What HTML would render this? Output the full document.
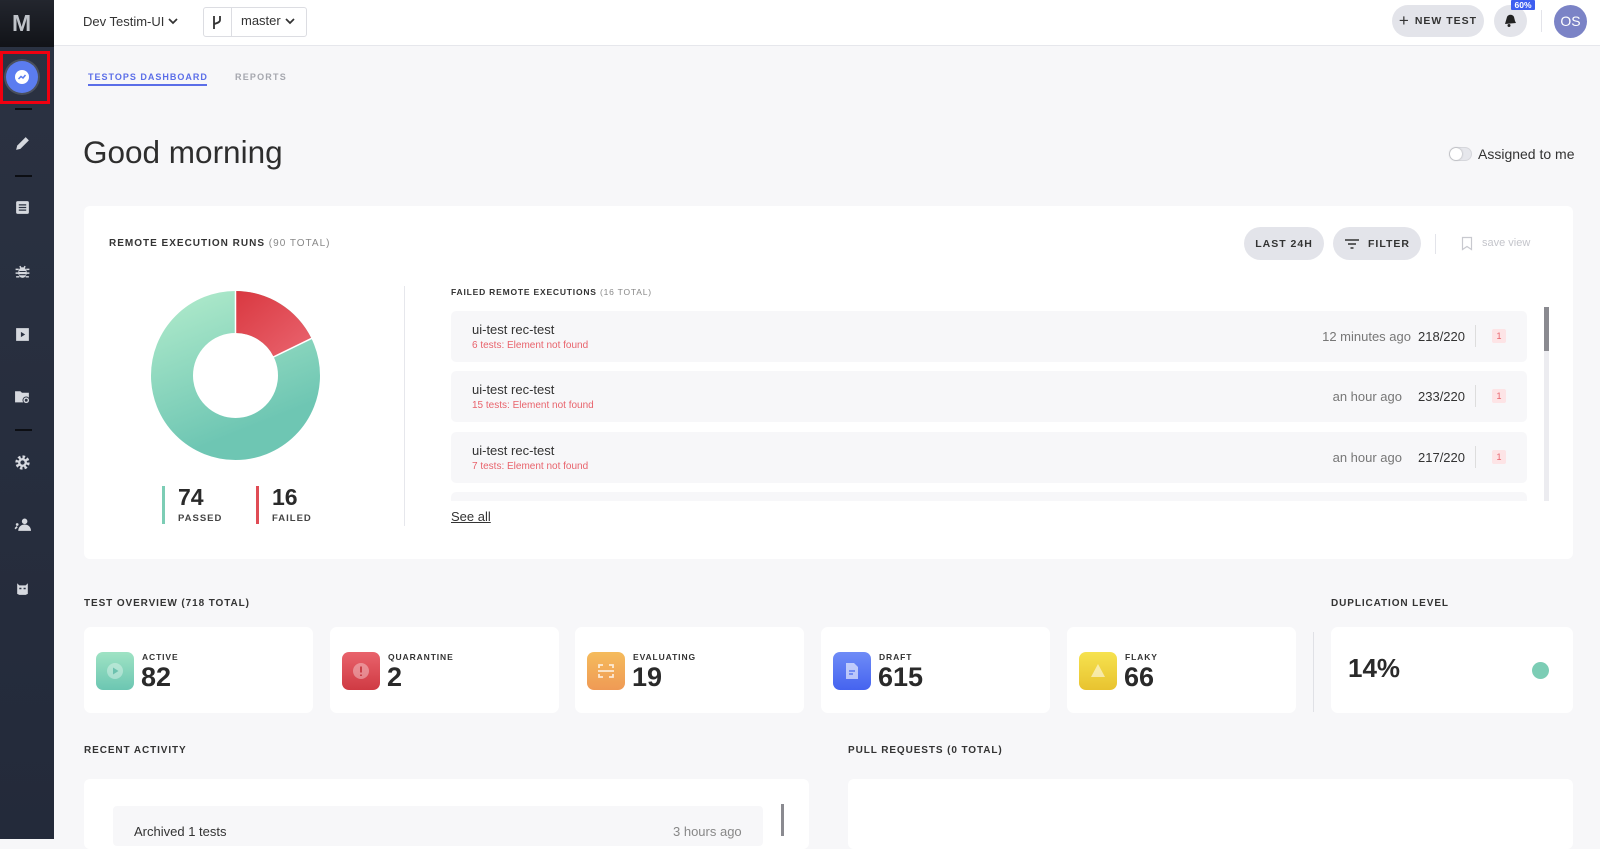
<!DOCTYPE html>
<html><head><meta charset="utf-8"><style>
*{box-sizing:border-box;margin:0;padding:0}
body{width:1600px;height:839px;overflow:hidden;background:#f7f7f9;font-family:"Liberation Sans",sans-serif;color:#333;position:relative}
.abs{position:absolute}
.side{left:0;top:0;width:54px;height:839px;background:linear-gradient(#2b3242,#232a3a)}
.logo{left:0;top:0;width:54px;height:47px;background:linear-gradient(#23262e,#111318)}
.sep{left:15px;width:17px;height:2px;background:#0c0e13}
.ic{left:14px;width:17px;height:17px}
.top{left:54px;top:0;width:1546px;height:46px;background:#fff;border-bottom:1px solid #e6e7ec}
.cap{font-size:10px;font-weight:bold;letter-spacing:1.1px;color:#333}
.cap span{color:#888;font-weight:normal}
.btn{background:#e3e4ea;border-radius:17px;font-size:10.5px;font-weight:bold;letter-spacing:1px;color:#333;display:flex;align-items:center;justify-content:center}
.card{background:#fff;border-radius:7px;top:627px;height:86px;width:229px}
.card .i{position:absolute;left:12px;top:25px;width:38px;height:38px;border-radius:7px}
.card .i svg{position:absolute;left:9px;top:9px}
.card .l{position:absolute;left:58px;top:25px;font-size:8.5px;font-weight:bold;letter-spacing:0.9px;color:#333}
.card .n{position:absolute;left:57px;top:35px;font-size:27px;font-weight:bold;color:#2a2a2a}
.row{left:451px;width:1076px;height:51px;background:#f7f7f9;border-radius:5px}
.row .t{position:absolute;left:21px;top:11px;font-size:13px;color:#333}
.row .s{position:absolute;left:21px;top:29px;font-size:10px;color:#e8636c}
.row .tm{position:absolute;right:112px;top:18px;font-size:13px;color:#777}
.row .v{position:absolute;right:62px;top:18px;font-size:13px;color:#333}
.row .d{position:absolute;left:1024px;top:14px;width:1px;height:22px;background:#ddd}
.row .b{position:absolute;left:1041px;top:18px;width:14px;height:14px;background:#fde4e6;color:#e8636c;font-size:9px;text-align:center;line-height:14px;border-radius:2px}
</style></head><body>
<div class="abs side"></div>
<div class="abs logo"></div>
<div class="abs" style="left:12px;top:10px;font-size:23px;font-weight:bold;color:#bfc3c9">M</div>
<div class="abs" style="left:0;top:51px;width:50px;height:53px;border:3px solid #f00010"></div>
<div class="abs" style="left:6px;top:61px;width:32px;height:32px;border-radius:50%;background:#5b7cf0;box-shadow:0 0 0 2px rgba(255,255,255,.15)"></div>
<div class="abs" style="left:15px;top:70px;width:14px;height:14px;border-radius:50%;background:#fff"></div>
<svg class="abs" style="left:15px;top:70px" width="14" height="14"><path d="M3.5 9 L6 6.5 L8 8 L10.5 5" stroke="#5b7cf0" stroke-width="1.5" fill="none"/></svg>
<div class="abs sep" style="top:108px"></div>
<div class="abs sep" style="top:175px"></div>
<div class="abs sep" style="top:429px"></div>
<svg class="abs ic" style="top:135px" viewBox="0 0 16 16"><path d="M2 14 L3 10 L11 2 L14 5 L6 13 Z" fill="#d6d9df"/></svg>
<svg class="abs ic" style="top:199px" viewBox="0 0 16 16"><rect x="2" y="2" width="12" height="12" rx="1.5" fill="#d6d9df"/><path d="M4.5 5.5h7M4.5 8h7M4.5 10.5h7" stroke="#2b3242" stroke-width="1.2"/></svg>
<svg class="abs ic" style="top:263px" viewBox="0 0 16 16"><ellipse cx="8" cy="9" rx="4" ry="5" fill="#d6d9df"/><path d="M1.5 6h3M11.5 6h3M1.5 9.5h3M11.5 9.5h3M2 13h3M11 13h3M5.5 3l1 1.5M10.5 3l-1 1.5" stroke="#d6d9df" stroke-width="1.4"/><path d="M5 8h6M5 11h6" stroke="#2b3242" stroke-width="1"/></svg>
<svg class="abs ic" style="top:326px" viewBox="0 0 16 16"><rect x="2" y="2" width="12" height="12" fill="#d6d9df"/><path d="M6.5 5.5v5l4-2.5z" fill="#2b3242"/></svg>
<svg class="abs ic" style="top:388px" viewBox="0 0 16 16"><path d="M1 3h5l1.5 1.5H14v9H1z" fill="#d6d9df"/><circle cx="11.5" cy="11.5" r="3.5" fill="#2b3242"/><circle cx="11.5" cy="11.5" r="2" fill="none" stroke="#d6d9df" stroke-width="1.3"/></svg>
<svg class="abs ic" style="top:454px" viewBox="0 0 16 16"><circle cx="8" cy="8" r="5" fill="none" stroke="#d6d9df" stroke-width="3.5" stroke-dasharray="2.2 1.7"/><circle cx="8" cy="8" r="4.2" fill="#d6d9df"/><circle cx="8" cy="8" r="2" fill="#2b3242"/></svg>
<svg class="abs ic" style="top:516px" viewBox="0 0 16 16"><circle cx="10" cy="5" r="2.6" fill="#d6d9df"/><path d="M4 14c0-4 3-6 6-6s6 2 6 6z" fill="#d6d9df"/><circle cx="3" cy="8" r="1.3" fill="#d6d9df"/><path d="M1 12l2-2" stroke="#d6d9df" stroke-width="1.5"/></svg>
<svg class="abs ic" style="top:580px" viewBox="0 0 16 16"><path d="M3 3l2 2h6l2-2v10l-2 1H5l-2-1z" fill="#d6d9df"/><path d="M5 8h2M9 8h2" stroke="#2b3242" stroke-width="1.4"/></svg>

<div class="abs top"></div>
<div class="abs" style="left:83px;top:14px;font-size:13px;color:#333">Dev Testim-UI</div>
<svg class="abs" style="left:167px;top:16px" width="12" height="10"><path d="M2 3l4 4 4-4" stroke="#333" stroke-width="1.7" fill="none"/></svg>
<div class="abs" style="left:203px;top:7px;width:104px;height:30px;border:1px solid #dcdde2;border-radius:3px;background:#fff"></div>
<div class="abs" style="left:231px;top:8px;width:1px;height:28px;background:#dcdde2"></div>
<svg class="abs" style="left:210px;top:14px" width="14" height="16"><path d="M4 2v13M10 2v4c0 2-2 3-6 4" stroke="#333" stroke-width="1.8" fill="none"/></svg>
<div class="abs" style="left:241px;top:13px;font-size:13px;color:#333">master</div>
<svg class="abs" style="left:284px;top:16px" width="12" height="10"><path d="M2 3l4 4 4-4" stroke="#333" stroke-width="1.7" fill="none"/></svg>
<div class="abs btn" style="left:1392px;top:5px;width:92px;height:32px;font-size:10.5px"><span style="font-size:17px;font-weight:normal;margin-right:5px">+</span>NEW TEST</div>
<div class="abs btn" style="left:1494px;top:5px;width:33px;height:32px"></div>
<svg class="abs" style="left:1502px;top:12px" width="16" height="16" viewBox="0 0 16 16"><path d="M3 12l2-7c1-3 6-3 7 0l1 4 1 2z" fill="#222"/><circle cx="7" cy="13.5" r="1.5" fill="#222"/></svg>
<div class="abs" style="left:1511px;top:0;width:24px;height:10px;background:#3d5ef0;color:#fff;font-size:8.5px;font-weight:bold;text-align:center;line-height:10px;border-radius:1px">60%</div>
<div class="abs" style="left:1541px;top:10px;width:1px;height:22px;background:#e3e4ea"></div>
<div class="abs" style="left:1554px;top:5px;width:33px;height:33px;border-radius:50%;background:#7b83c6;color:#fff;font-size:14px;text-align:center;line-height:33px">OS</div>

<div class="abs" style="left:88px;top:72px;font-size:9px;font-weight:bold;letter-spacing:1px;color:#5b6ee8">TESTOPS DASHBOARD</div>
<div class="abs" style="left:88px;top:84px;width:119px;height:2px;background:#5b6ee8"></div>
<div class="abs" style="left:235px;top:72px;font-size:9px;font-weight:bold;letter-spacing:1.2px;color:#a5a7ae">REPORTS</div>

<div class="abs" style="left:83px;top:134px;font-size:31.5px;color:#2e2e2e">Good morning</div>
<div class="abs" style="left:1449px;top:147px;width:23px;height:14px;border-radius:7px;background:#e6e7ec;border:1px solid #d6d7dc"></div>
<div class="abs" style="left:1450px;top:148px;width:12px;height:12px;border-radius:50%;background:#fff;box-shadow:0 0 2px rgba(0,0,0,.3)"></div>
<div class="abs" style="left:1478px;top:146px;font-size:14px;color:#333">Assigned to me</div>

<div class="abs" style="left:84px;top:206px;width:1489px;height:353px;background:#fff;border-radius:6px"></div>
<div class="abs cap" style="left:109px;top:238px;letter-spacing:1px">REMOTE EXECUTION RUNS <span>(90 TOTAL)</span></div>
<div class="abs btn" style="left:1244px;top:227px;width:80px;height:33px">LAST 24H</div>
<div class="abs btn" style="left:1333px;top:227px;width:88px;height:33px"><svg width="16" height="12" style="margin-right:8px"><path d="M1 2h14M4 6h8M6.5 10h3" stroke="#333" stroke-width="1.6"/></svg>FILTER</div>
<div class="abs" style="left:1435px;top:234px;width:1px;height:20px;background:#e3e4ea"></div>
<svg class="abs" style="left:1461px;top:236px" width="12" height="15"><path d="M1.5 1.5h9v12l-4.5-3-4.5 3z" fill="none" stroke="#c8c9cf" stroke-width="1.2"/></svg>
<div class="abs" style="left:1482px;top:237px;font-size:11px;color:#c4c5cb">save view</div>

<svg class="abs" style="left:150px;top:290px" width="171" height="171" viewBox="-85.5 -85.5 171 171">
<defs><linearGradient id="gg" x1="0" y1="0" x2="0.4" y2="1"><stop offset="0" stop-color="#a8e6c8"/><stop offset="1" stop-color="#6ec6b3"/></linearGradient>
<linearGradient id="rg" x1="0" y1="0" x2="1" y2="1"><stop offset="0" stop-color="#d93840"/><stop offset="1" stop-color="#ea6570"/></linearGradient></defs>
<circle r="63.5" fill="none" stroke="url(#gg)" stroke-width="42"/>
<path d="M0 -84.5 A84.5 84.5 0 0 1 75.95 -37.04 L38.2 -18.63 A42.5 42.5 0 0 0 0 -42.5Z" fill="url(#rg)"/>
<path d="M0 -85V-42M76.5 -37.3L37.8 -18.4" stroke="#fff" stroke-width="1.5"/>
</svg>
<div class="abs" style="left:162px;top:486px;width:3px;height:38px;background:#7ccdb5"></div>
<div class="abs" style="left:178px;top:484px;font-size:23px;font-weight:bold;color:#2a2a2a">74</div>
<div class="abs" style="left:178px;top:513px;font-size:9.5px;font-weight:bold;letter-spacing:1px;color:#444">PASSED</div>
<div class="abs" style="left:256px;top:486px;width:3px;height:38px;background:#e04c55"></div>
<div class="abs" style="left:272px;top:484px;font-size:23px;font-weight:bold;color:#2a2a2a">16</div>
<div class="abs" style="left:272px;top:513px;font-size:9.5px;font-weight:bold;letter-spacing:1px;color:#444">FAILED</div>
<div class="abs" style="left:404px;top:286px;width:1px;height:240px;background:#e6e7ec"></div>

<div class="abs cap" style="left:451px;top:287px;font-size:8.5px;letter-spacing:0.8px">FAILED REMOTE EXECUTIONS <span>(16 TOTAL)</span></div>
<div class="abs row" style="top:311px"><div class="t">ui-test rec-test</div><div class="s">6 tests: Element not found</div><div class="tm" style="right:116px">12 minutes ago</div><div class="v">218/220</div><div class="d"></div><div class="b">1</div></div>
<div class="abs row" style="top:371px"><div class="t">ui-test rec-test</div><div class="s">15 tests: Element not found</div><div class="tm" style="right:125px">an hour ago</div><div class="v">233/220</div><div class="d"></div><div class="b">1</div></div>
<div class="abs row" style="top:432px"><div class="t">ui-test rec-test</div><div class="s">7 tests: Element not found</div><div class="tm" style="right:125px">an hour ago</div><div class="v">217/220</div><div class="d"></div><div class="b">1</div></div>
<div class="abs" style="left:451px;top:492px;width:1076px;height:9px;background:#f7f7f9;border-radius:5px 5px 0 0"></div>
<div class="abs" style="left:1544px;top:307px;width:5px;height:194px;background:#ececf0"></div>
<div class="abs" style="left:1544px;top:307px;width:5px;height:44px;background:#8a8a90"></div>
<div class="abs" style="left:451px;top:509px;font-size:13px;color:#333;text-decoration:underline">See all</div>

<div class="abs cap" style="left:84px;top:598px;letter-spacing:0.9px">TEST OVERVIEW (718 TOTAL)</div>
<div class="abs cap" style="left:1331px;top:598px;letter-spacing:0.9px">DUPLICATION LEVEL</div>
<div class="abs card" style="left:84px"><div class="i" style="background:linear-gradient(#9fe3c4,#6cc6b2)"><svg width="20" height="20"><circle cx="10" cy="10" r="8" fill="rgba(255,255,255,.35)"/><path d="M8 6.5v7l5.5-3.5z" fill="rgba(80,180,160,.7)"/></svg></div><div class="l">ACTIVE</div><div class="n">82</div></div>
<div class="abs card" style="left:330px"><div class="i" style="background:linear-gradient(#e9636c,#cf3a43)"><svg width="20" height="20"><circle cx="10" cy="10" r="8" fill="rgba(255,255,255,.35)"/><path d="M10 5.5v6M10 13.5v1.5" stroke="#c73840" stroke-width="1.8"/></svg></div><div class="l">QUARANTINE</div><div class="n">2</div></div>
<div class="abs card" style="left:575px"><div class="i" style="background:linear-gradient(#f5bb5c,#ef9a55)"><svg width="20" height="20"><path d="M3 7V4h4M13 4h4v3M3 13v3h4M13 16h4v-3M2 10h16" stroke="rgba(255,255,255,.75)" stroke-width="1.8" fill="none"/></svg></div><div class="l">EVALUATING</div><div class="n">19</div></div>
<div class="abs card" style="left:821px"><div class="i" style="background:linear-gradient(#6f8cf7,#4563ef)"><svg width="20" height="20"><path d="M4 2h8l4 4v12H4z" fill="rgba(255,255,255,.6)"/><path d="M7 10h6M7 13h4" stroke="#5a78f2" stroke-width="1.4"/></svg></div><div class="l">DRAFT</div><div class="n">615</div></div>
<div class="abs card" style="left:1067px"><div class="i" style="background:linear-gradient(#f6e24f,#e8c330)"><svg width="20" height="20"><path d="M10 3l7 13H3z" fill="rgba(255,255,255,.55)"/></svg></div><div class="l">FLAKY</div><div class="n">66</div></div>
<div class="abs" style="left:1313px;top:632px;width:1px;height:80px;background:#e0e1e6"></div>
<div class="abs" style="left:1331px;top:627px;width:242px;height:86px;background:#fff;border-radius:7px"></div>
<div class="abs" style="left:1348px;top:653px;font-size:26px;font-weight:bold;color:#2a2a2a">14%</div>
<div class="abs" style="left:1532px;top:662px;width:17px;height:17px;border-radius:50%;background:#7ccdb5"></div>

<div class="abs cap" style="left:84px;top:745px;letter-spacing:0.9px">RECENT ACTIVITY</div>
<div class="abs cap" style="left:848px;top:745px;letter-spacing:0.9px">PULL REQUESTS (0 TOTAL)</div>
<div class="abs" style="left:84px;top:779px;width:725px;height:70px;background:#fff;border-radius:6px"></div>
<div class="abs" style="left:848px;top:779px;width:725px;height:70px;background:#fff;border-radius:6px"></div>
<div class="abs" style="left:113px;top:806px;width:650px;height:40px;background:#f7f7f9;border-radius:4px"></div>
<div class="abs" style="left:134px;top:824px;font-size:13px;color:#333">Archived 1 tests</div>
<div class="abs" style="left:673px;top:824px;font-size:13px;color:#888">3 hours ago</div>
<div class="abs" style="left:781px;top:804px;width:3px;height:32px;background:#8a8a90"></div>
</body></html>
